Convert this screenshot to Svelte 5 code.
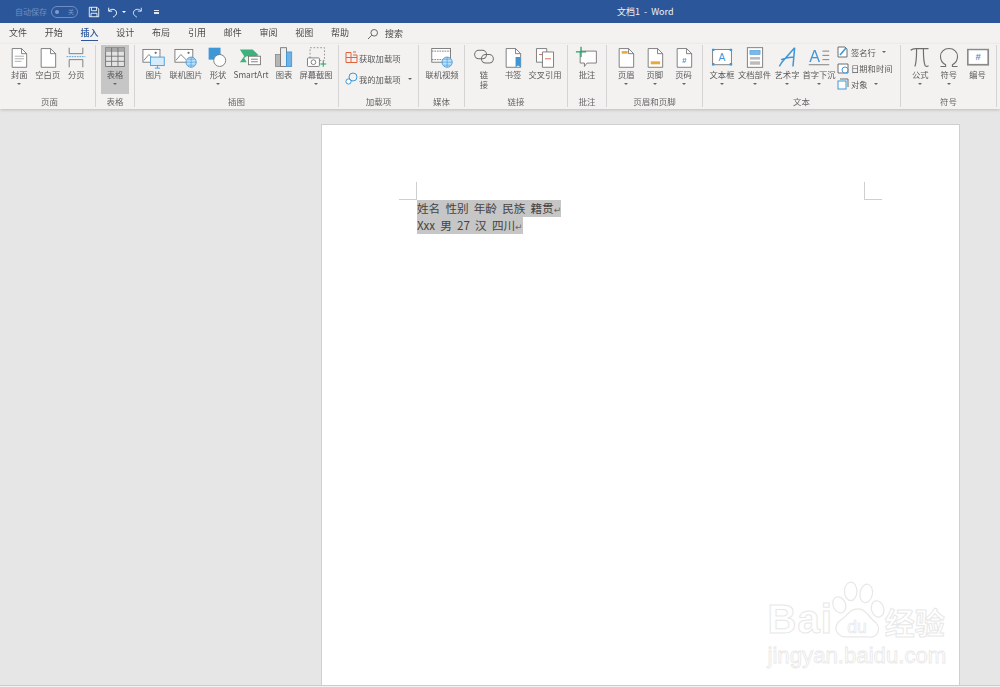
<script>
  const G = '#6e6e6e';
  const B = '#3f97d8';
  const page = (extra = '') => `<path d="M7 3h11l6 6v16H7z" fill="#fff" stroke="${G}"/><path d="M18 3v6h6" fill="none" stroke="${G}"/>${extra}`;
  const icons = {
    cover: page(`<path d="M10 12h11M10 15h11M10 18h8" stroke="#a5a5a5"/>`),
    blank: page(),
    pagebreak: `<path d="M7 2v7h16V2M7 25v-9h16v9" fill="none" stroke="${G}"/><path d="M4 12.5h22" stroke="${B}" stroke-dasharray="2 1"/>`,
    table: `<rect x="4" y="2" width="22" height="22" fill="#e3e3e3" stroke="${G}"/><path d="M4 7h22v-5H4z" fill="#a8a8a8"/><path d="M4 12h22M4 18h22M11 2v22M18.500 2v22" stroke="${G}" fill="none"/>`,
    picture: `<rect x="2" y="4" width="20" height="15" fill="#fff" stroke="${G}"/><path d="M3 17l6-7 6 6" fill="none" stroke="${G}"/><circle cx="17" cy="8" r="1.300" fill="${G}"/><rect x="11" y="13" width="16" height="10" fill="#d6ecfa" stroke="${B}"/><path d="M16 26h6M19 23v3" stroke="${B}"/>`,
    online: `<rect x="2" y="4" width="21" height="15" fill="#fff" stroke="${G}"/><path d="M3 17l6-7 6 6" fill="none" stroke="${G}"/><circle cx="18" cy="8" r="1.300" fill="${G}"/><circle cx="21" cy="19" r="6" fill="#bfe0f6" stroke="${B}"/><path d="M15 19h12M21 13v12M17 15.500h8M17 22.500h8" stroke="${B}" stroke-width=".7"/>`,
    shapes: `<rect x="4" y="2" width="14" height="14" fill="${B}"/><circle cx="17" cy="17" r="7" fill="#fff" stroke="${G}"/>`,
    smartart: `<path d="M2 4h15l7 7-4 1H10l-3 2 3 5H2l5-7z" fill="#3eb27c"/><rect x="12" y="12" width="14" height="10" fill="#fff" stroke="${G}"/><path d="M15 15.500h8M15 18.500h8" stroke="${G}"/>`,
    chart: `<rect x="5" y="10" width="6" height="14" fill="#b5b5b5" stroke="${G}" stroke-width=".7"/><rect x="11" y="2" width="7" height="22" fill="#eee" stroke="${G}"/><rect x="18" y="7" width="6" height="17" fill="#6fb3e6" stroke="${B}"/>`,
    screenshot: `<rect x="8" y="2" width="17" height="15" fill="none" stroke="#8a8a8a" stroke-dasharray="2 2"/><rect x="5" y="14" width="14" height="10" rx="1" fill="#fff" stroke="${G}"/><circle cx="12" cy="19" r="2.800" fill="none" stroke="${G}"/><path d="M20 21h7M23.500 17.500v7" stroke="#21a366" stroke-width="1.200"/>`,
    video: `<rect x="3" y="3" width="22" height="16" fill="#fff" stroke="${G}"/><path d="M3 6h22M3 16h22" stroke="${G}" stroke-dasharray="2 1"/><circle cx="21" cy="19" r="6" fill="#bfe0f6" stroke="${B}"/><path d="M15 19h12M21 13v12M17 15.500h8M17 22.500h8" stroke="${B}" stroke-width=".7"/>`,
    link: `<rect x="4" y="5" width="14" height="10" rx="5" fill="none" stroke="${G}" stroke-width="1.200"/><rect x="12" y="10" width="14" height="10" rx="5" fill="none" stroke="${G}" stroke-width="1.200"/>`,
    bookmark: page(`<path d="M18 13h6v12l-3-2-3 2z" fill="${B}"/>`),
    crossref: `<path d="M5 3h12v16H5z" fill="#fff" stroke="${G}"/><path d="M8 10h4" stroke="#e0533d"/><path d="M12 7h13v18H12z" fill="#fff" stroke="${G}"/><path d="M15 15h7" stroke="#e0533d"/>`,
    comment: `<path d="M7 6h19v14H15l-3 4v-4H7z" fill="#fff" stroke="${G}"/><path d="M2 7h12M8 1v12" stroke="#21a366" stroke-width="1.500"/>`,
    header: page(`<rect x="10" y="6" width="7" height="3" fill="#eba83f"/>`),
    footer: page(`<rect x="10" y="18" width="11" height="3.500" fill="#eba83f"/>`),
    pagenum: page(`<text x="15.500" y="20" font-size="9" font-weight="700" text-anchor="middle" fill="${B}" font-family="Liberation Sans">#</text>`),
    textbox: `<rect x="4" y="4" width="22" height="18" fill="#fff" stroke="${G}"/><path d="M3 3h3v3H3zM24 3h3v3h-3zM3 20h3v3H3zM24 20h3v3h-3z" fill="${B}"/><text x="15" y="18" font-size="12" text-anchor="middle" fill="${B}" font-family="Liberation Sans">A</text>`,
    parts: `<rect x="6" y="2" width="18" height="23" fill="#fff" stroke="${G}"/><rect x="9" y="5" width="12" height="5" fill="#7db9e8" stroke="${B}" stroke-width=".6"/><rect x="9" y="13" width="12" height="3" fill="#bbb"/><rect x="9" y="18" width="12" height="4" fill="#bbb"/>`,
    wordart: `<path d="M24 2L9 19l-3 5M24 2l-2 22M8 16c5-2 10-3 15-3" fill="none" stroke="${B}" stroke-width="1.800"/>`,
    dropcap: `<text x="10" y="19" font-size="19" text-anchor="middle" fill="${B}" font-family="Liberation Sans">A</text><path d="M19 6h8M19 11h8M19 16h8M3 22h24" stroke="${G}"/>`,
    pi: `<path d="M4 5c2-2 4-2 6-2h15M11 3c0 8 0 16-2 21M19 3c0 8 0 16 2 20 1 1 3 1 4 0" fill="none" stroke="${G}" stroke-width="1.400"/>`,
    omega: `<path d="M5 24h6v-2c-4-2-6-6-6-10 0-5 4-9 10-9s10 4 10 9c0 4-2 8-6 10v2h6" fill="none" stroke="${G}" stroke-width="1.300"/>`,
    numbering: `<rect x="3" y="4" width="24" height="18" fill="#fff" stroke="#8a8a8a" stroke-width="2"/><text x="15" y="17" font-size="11" font-weight="700" text-anchor="middle" fill="${B}" font-family="Liberation Sans">#</text>`,
  };

  const tabs = ['文件', '开始', '插入', '设计', '布局', '引用', '邮件', '审阅', '视图', '帮助'];

  const groups = [
    { label: '页面', w: 92, pad: 1, items: [
      { icon: 'cover', text: '封面', w: 28.5, drop: true },
      { icon: 'blank', text: '空白页', w: 28.5 },
      { icon: 'pagebreak', text: '分页', w: 28.5 },
    ] },
    { label: '表格', w: 39, pad: 5, items: [{ icon: 'table', text: '表格', w: 28, drop: true, on: true }] },
    { label: '插图', w: 204, pad: 3, items: [
      { icon: 'picture', text: '图片', w: 32 },
      { icon: 'online', text: '联机图片', w: 32 },
      { icon: 'shapes', text: '形状', w: 32, drop: true },
      { icon: 'smartart', text: 'SmartArt', w: 34 },
      { icon: 'chart', text: '图表', w: 32 },
      { icon: 'screenshot', text: '屏幕截图', w: 32, drop: true },
    ] },
    { label: '加载项', w: 80, addins: true, items: [] },
    { label: '媒体', w: 46, pad: 4, items: [{ icon: 'video', text: '联机视频', w: 38 }] },
    { label: '链接', w: 103, pad: 5, items: [
      { icon: 'link', text: '链\n接', w: 28 },
      { icon: 'bookmark', text: '书签', w: 30 },
      { icon: 'crossref', text: '交叉引用', w: 34 },
    ] },
    { label: '批注', w: 39, pad: 4, items: [{ icon: 'comment', text: '批注', w: 30 }] },
    { label: '页眉和页脚', w: 96, pad: 5, items: [
      { icon: 'header', text: '页眉', w: 28.5, drop: true },
      { icon: 'footer', text: '页脚', w: 28.5, drop: true },
      { icon: 'pagenum', text: '页码', w: 29, drop: true },
    ] },
    { label: '文本', w: 198, pad: 3, side: true, items: [
      { icon: 'textbox', text: '文本框', w: 32, drop: true },
      { icon: 'parts', text: '文档部件', w: 33, drop: true },
      { icon: 'wordart', text: '艺术字', w: 32, drop: true },
      { icon: 'dropcap', text: '首字下沉', w: 32, drop: true },
    ] },
    { label: '符号', w: 96, pad: 5, items: [
      { icon: 'pi', text: '公式', w: 28.5, drop: true },
      { icon: 'omega', text: '符号', w: 28.5, drop: true },
      { icon: 'numbering', text: '编号', w: 29 },
    ] },
  ];
</script>

<div class="app">
  <header class="titlebar">
    <div class="quick">
      <span class="autosave">自动保存</span>
      <span class="toggle"><i></i><b>关</b></span>
      <svg class="qa save" width="12" height="12" viewBox="0 0 14 14"><path d="M1.500 1.500h9l2 2v9h-11zM4 1.500v4h6v-4M3.500 12.500v-4h7v4" fill="none" stroke="#fff"/></svg>
      <svg class="qa" width="12" height="12" viewBox="0 0 14 14"><path d="M2 2v4h4M2 6c2-3 8-3 9 1 1 3-2 5-4 6" fill="none" stroke="#fff" stroke-width="1.100"/></svg>
      <span class="caret light"></span>
      <svg class="qa redo" width="12" height="12" viewBox="0 0 14 14"><path d="M12 2v4H8M12 6c-2-3-8-3-9 1-1 3 2 5 4 6" fill="none" stroke="#dfe7f3" stroke-width="1.100"/></svg>
      <span class="more"></span>
    </div>
    <div class="title">文档1&nbsp; - &nbsp;Word</div>
  </header>

  <nav class="tabs">
    {#each tabs as tab}
      <span class="tab" class:active={tab === '插入'}>{tab}</span>
    {/each}
    <span class="search">
      <svg width="12" height="12" viewBox="0 0 12 12"><circle cx="7.200" cy="4.800" r="3.300" fill="none" stroke="#666"/><path d="M4.700 7.300L1 11" stroke="#666"/></svg>
      搜索
    </span>
  </nav>

  <section class="ribbon">
    {#each groups as g}
      <div class="group" style="width:{g.w}px">
        <div class="items" style="padding-left:{g.pad ?? 0}px">
          {#if g.addins}
            <div class="addins">
              <div class="addin">
                <svg width="13" height="13" viewBox="0 0 13 13"><path d="M1 1.500h5v10H1zM1 6.500h11M8 4h4v7.500H6" fill="none" stroke="#e0633f"/><path d="M8 1h3" stroke="#e0633f"/></svg>
                获取加载项
              </div>
              <div class="addin">
                <svg width="13" height="13" viewBox="0 0 13 13"><circle cx="8" cy="5" r="4" fill="none" stroke="{B}"/><circle cx="3.500" cy="9.500" r="2.600" fill="#fff" stroke="{B}"/></svg>
                我的加载项
                <span class="caret addin-caret"></span>
              </div>
            </div>
          {/if}
          {#each g.items as it}
            <div class="item" class:on={it.on} style="width:{it.w}px">
              <svg width="26" height="23" viewBox="0 0 30 27">{@html icons[it.icon]}</svg>
              <span class="label">{it.text}</span>
              {#if it.drop}<span class="caret"></span>{/if}
            </div>
          {/each}
          {#if g.side}
            <div class="side">
              <div class="side-row">
                <svg width="12" height="12" viewBox="0 0 12 12"><path d="M1 1h7l2 2v8H1z" fill="#fff" stroke="{G}"/><path d="M3 9l6-7" stroke="{B}" stroke-width="1.600"/></svg>
                签名行 <span class="caret inline"></span>
              </div>
              <div class="side-row">
                <svg width="12" height="12" viewBox="0 0 12 12"><path d="M1 2h10v9H1z" fill="#fff" stroke="{G}"/><circle cx="8" cy="8" r="3" fill="#fff" stroke="{B}"/></svg>
                日期和时间
              </div>
              <div class="side-row">
                <svg width="12" height="12" viewBox="0 0 12 12"><path d="M3 1h8v8" fill="none" stroke="{G}"/><rect x="1" y="3" width="8" height="8" fill="#fff" stroke="{B}"/></svg>
                对象 <span class="caret inline"></span>
              </div>
            </div>
          {/if}
        </div>
        <div class="group-label">{g.label}</div>
      </div>
    {/each}
  </section>

  <main class="workspace">
    <article class="page">
      <span class="mark left"></span>
      <span class="mark right"></span>
      <p><span class="sel">姓名&nbsp; 性别&nbsp; 年龄&nbsp; 民族&nbsp; 籍贯<em>↵</em></span></p>
      <p><span class="sel">Xxx&nbsp; 男&nbsp; 27&nbsp; 汉&nbsp; 四川<em>↵</em></span></p>

      <div class="watermark">
        <div class="wm-top">
          <span class="wm-bai">Bai</span>
          <svg class="paw" width="58" height="60" viewBox="0 0 56 58">
            <g fill="#fff" stroke="#e8e8e8" stroke-width="1.200">
              <ellipse cx="9" cy="23" rx="6" ry="8" transform="rotate(-25 9 23)"/>
              <ellipse cx="20" cy="10" rx="6" ry="9"/>
              <ellipse cx="35" cy="12" rx="6" ry="9" transform="rotate(10 35 12)"/>
              <ellipse cx="46" cy="27" rx="6" ry="8" transform="rotate(-15 46 27)"/>
              <path d="M27 27c8 0 11 9 17 13 6 6 2 16-8 14H16C6 54 2 45 10 38c6-3 8-11 17-11z"/>
            </g>
            <text x="26" y="50" class="wm-du">du</text>
          </svg>
          <span class="wm-cn">经验</span>
        </div>
        <div class="wm-url">jingyan.baidu.com</div>
      </div>
    </article>
  </main>
  <div class="statusbar"></div>
</div>

<style>
  :global(body) {
    margin: 0;
    background: #e6e6e6;
  }

  .app {
    width: 1000px;
    height: 687px;
    overflow: hidden;
    display: flex;
    flex-direction: column;
    font-family: "Noto Sans CJK SC", "Liberation Sans", sans-serif;
    color: #555;
    filter: blur(0.3px);
  }

  .titlebar {
    height: 23px;
    flex: none;
    background: #2b579a;
    display: flex;
    align-items: center;
    color: #fff;
  }

  .quick {
    width: 617px;
    flex: none;
    display: flex;
    align-items: center;
    padding-left: 15px;
    box-sizing: border-box;
  }

  .autosave {
    font-size: 8px;
    color: #6d8fc2;
  }

  .toggle {
    height: 10px;
    margin-left: 4px;
    border: 1px solid #6d8fc2;
    border-radius: 6px;
    display: flex;
    align-items: center;
    justify-content: space-between;
    padding: 0 3px;
    box-sizing: content-box;
    width: 19px;
  }

  .toggle i {
    width: 4px;
    height: 4px;
    border-radius: 50%;
    background: #7f9dcb;
  }

  .toggle b {
    font-size: 6px;
    font-weight: 400;
    color: #7f9dcb;
  }

  .qa {
    margin-left: 3px;
  }

  .save {
    margin-left: 10px;
    margin-right: 4px;
  }

  .redo {
    margin-left: 5px;
  }

  .more {
    width: 5px;
    height: 4px;
    margin-left: 11px;
    border-top: 1px solid #dfe7f3;
    border-bottom: 2px solid #dfe7f3;
    box-sizing: border-box;
  }

  .title {
    font-size: 9px;
    white-space: nowrap;
    color: #eef2f8;
  }

  .tabs {
    height: 21px;
    flex: none;
    background: #f3f2f1;
    display: flex;
    align-items: center;
    font-size: 9px;
  }

  .tab {
    width: 35.800px;
    height: 21px;
    line-height: 20px;
    text-align: center;
    box-sizing: border-box;
    flex: none;
    color: #4a4a4a;
    position: relative;
  }

  .tab.active {
    color: #2b579a;
    font-weight: 500;
  }

  .tab.active::after {
    content: "";
    position: absolute;
    left: 9px;
    right: 9px;
    bottom: 3px;
    height: 1.500px;
    background: #2b579a;
  }

  .search {
    margin-left: 9px;
    display: flex;
    align-items: center;
    gap: 6px;
    color: #4a4a4a;
  }

  .ribbon {
    height: 65px;
    flex: none;
    display: flex;
    background: #f3f2f1;
    box-shadow: 0 1px 3px rgba(0, 0, 0, 0.18);
    position: relative;
    padding-top: 1px;
    box-sizing: border-box;
    padding-left: 4px;
  }

  .group {
    flex: none;
    box-sizing: border-box;
    display: flex;
    flex-direction: column;
    position: relative;
    border-right: 1px solid #d4d4d4;
    height: 62px;
  }

  .items {
    height: 49px;
    display: flex;
    flex: none;
  }

  .group-label {
    font-size: 8.500px;
    line-height: 13px;
    margin-top: 1px;
    text-align: center;
    color: #666;
  }

  .item {
    flex: none;
    height: 49px;
    display: flex;
    flex-direction: column;
    align-items: center;
    position: relative;
  }

  .item.on {
    background: #c6c6c6;
  }

  .item svg {
    flex: none;
    margin-top: 1px;
  }

  .label {
    font-size: 8.300px;
    line-height: 10px;
    white-space: pre-line;
    text-align: center;
    word-break: keep-all;
    min-width: 100%;
    width: 40px;
    color: #5a5a5a;
  }

  .caret {
    width: 0;
    height: 0;
    border-left: 2px solid transparent;
    border-right: 2px solid transparent;
    border-top: 2px solid #666;
    margin-top: 4px;
  }

  .caret.light {
    border-top-color: #fff;
    margin: 0 0 0 3px;
  }

  .caret.inline {
    display: inline-block;
    margin: 0 0 1px 4px;
    vertical-align: middle;
  }

  .addins {
    display: flex;
    flex-direction: column;
    padding: 5px 0 0 6px;
    gap: 6px;
  }

  .addin {
    display: flex;
    align-items: center;
    gap: 1px;
    height: 15px;
    font-size: 8.300px;
    white-space: nowrap;
    color: #5a5a5a;
  }

  .addin-caret {
    margin: 0 0 0 6px;
  }

  .side {
    display: flex;
    flex-direction: column;
    padding: 0 0 0 2px;
    margin-top: -1px;
  }

  .side-row {
    height: 16px;
    display: flex;
    align-items: center;
    gap: 2px;
    font-size: 8.300px;
    white-space: nowrap;
    color: #5a5a5a;
  }

  .workspace {
    flex: 1;
    background: #e6e6e6;
    padding: 15px 0 0 320.500px;
    min-height: 0;
    overflow: hidden;
  }

  .page {
    width: 639px;
    height: 562px;
    background: #fff;
    box-sizing: border-box;
    border: 1px solid #cfcfcf;
    padding: 75px 0 0 95.500px;
    position: relative;
    font-size: 11.600px;
    color: #444;
  }

  .statusbar {
    height: 2px;
    flex: none;
    box-sizing: border-box;
    border-top: 1px solid #cccccc;
    background: #f3f2f1;
  }

  .page p {
    margin: 0;
    height: 17px;
    line-height: 17px;
    white-space: nowrap;
  }

  .sel {
    display: inline-block;
    height: 17px;
    background: #c6c6c6;
  }

  .sel em {
    font-style: normal;
    font-size: 9px;
    color: #666;
    font-family: "DejaVu Sans", sans-serif;
  }

  .mark {
    position: absolute;
    top: 57px;
    width: 18px;
    height: 18px;
    border: 0 solid #cfcfcf;
    box-sizing: border-box;
  }

  .mark.left {
    left: 77px;
    border-right-width: 1px;
    border-bottom-width: 1px;
  }

  .mark.right {
    left: 542px;
    border-left-width: 1px;
    border-bottom-width: 1px;
  }

  .watermark {
    position: absolute;
    left: 446px;
    top: 452px;
    width: 185px;
    color: #fff;
    font-family: "Liberation Sans", "Noto Sans CJK SC", sans-serif;
  }

  .wm-top {
    display: flex;
    align-items: flex-end;
    height: 64px;
  }

  .wm-bai {
    font-size: 40px;
    line-height: 42px;
    letter-spacing: 1px;
    font-weight: 700;
    color: #fff;
    -webkit-text-stroke: 1px #e8e8e8;
    margin-bottom: 1px;
  }

  .paw {
    margin-left: -3px;
    flex: none;
  }

  .wm-du {
    font-size: 17px;
    fill: #fff;
    stroke: #e8e8e8;
    stroke-width: 0.700px;
    text-anchor: middle;
    font-family: "Liberation Sans", sans-serif;
  }

  .wm-cn {
    font-family: "Noto Sans CJK SC", sans-serif;
    font-size: 30px;
    line-height: 34px;
    font-weight: 700;
    color: #fff;
    -webkit-text-stroke: 1px #e8e8e8;
    margin: 0 0 3px -3px;
    white-space: nowrap;
  }

  .wm-url {
    margin-top: 2px;
    font-size: 22.200px;
    line-height: 26px;
    color: #fff;
    -webkit-text-stroke: 0.800px #e8e8e8;
    white-space: nowrap;
  }
</style>
